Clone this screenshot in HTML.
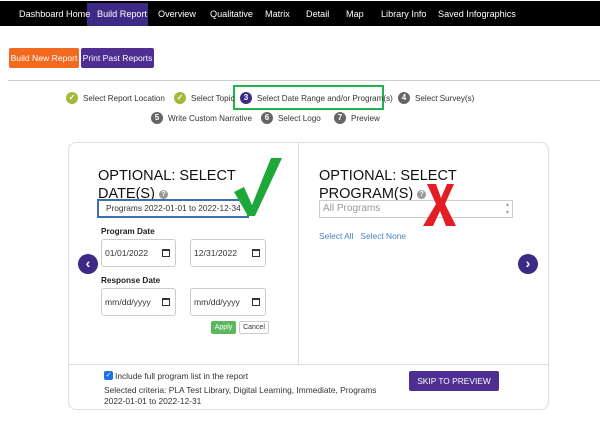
<!DOCTYPE html>
<html><head><meta charset="utf-8"><style>
*{box-sizing:border-box;margin:0;padding:0}
body{width:600px;height:439px;background:#fff;font-family:"Liberation Sans",Arial,sans-serif;position:relative;overflow:hidden;color:#222}
.a{position:absolute;white-space:nowrap}
.nav{left:0;top:1px;width:600px;height:25px;background:#000;color:#fff;font-size:9.1px}
.nav span{position:absolute;top:8px}
.btn{font-size:8.6px;color:#fff;border-radius:2px;text-align:center;line-height:20px;height:20px;top:48px}
.step{font-size:8.1px;color:#333}
.ic{display:inline-block;width:12px;height:12px;border-radius:50%;vertical-align:middle;margin-right:5px;color:#fff;font-size:8px;font-weight:bold;text-align:center;line-height:12px;position:relative;top:-1px}
.g{background:#a4b93a}.d{background:#666}.p{background:#3d2a86}
.title{font-size:14.5px;line-height:18px;color:#111}
.q{display:inline-block;width:9px;height:9px;border-radius:50%;background:#999;color:#fff;font-size:7px;line-height:9px;text-align:center;vertical-align:middle;font-weight:bold}
.inp{border:1px solid #ccc;border-radius:3px;font-size:8.6px;color:#333;padding-left:3px;line-height:26px}
.cal{position:absolute;right:5px;top:9px;width:8px;height:8px;border:1px solid #333;border-top-width:2px}
.lab{font-size:8.2px;font-weight:bold}
.circ{width:20px;height:20px;border-radius:50%;background:#3d2a86;color:#fff;font-weight:bold;font-size:14px;text-align:center;line-height:19px}
</style></head><body>
<div class="a nav">
<div class="a" style="left:87px;top:2px;width:61px;height:23px;background:#3d2a86"></div>
<span style="left:19px">Dashboard Home</span>
<span style="left:97px">Build Report</span>
<span style="left:158px">Overview</span>
<span style="left:210px">Qualitative</span>
<span style="left:265px">Matrix</span>
<span style="left:306px">Detail</span>
<span style="left:346px">Map</span>
<span style="left:381px">Library Info</span>
<span style="left:438px">Saved Infographics</span>
</div>
<div class="a btn" style="left:9px;width:70px;background:#f26a1f">Build New Report</div>
<div class="a btn" style="left:81px;width:73px;background:#4e2e91">Print Past Reports</div>
<div class="a" style="left:8px;top:80px;width:592px;height:1px;background:#ccc"></div>
<div class="a" style="left:233px;top:85px;width:151px;height:25px;border:2px solid #22b14c"></div>
<div class="a step" style="left:66px;top:93px"><span class="ic g">✓</span>Select Report Location</div>
<div class="a step" style="left:174px;top:93px"><span class="ic g">✓</span>Select Topic</div>
<div class="a step" style="left:240px;top:93px"><span class="ic p">3</span>Select Date Range and/or Program(s)</div>
<div class="a step" style="left:398px;top:93px"><span class="ic d">4</span>Select Survey(s)</div>
<div class="a step" style="left:151px;top:113px"><span class="ic d">5</span>Write Custom Narrative</div>
<div class="a step" style="left:261px;top:113px"><span class="ic d">6</span>Select Logo</div>
<div class="a step" style="left:334px;top:113px"><span class="ic d">7</span>Preview</div>

<div class="a" style="left:68px;top:142px;width:481px;height:268px;border:1px solid #ddd;border-radius:8px"></div>
<div class="a" style="left:298px;top:142px;width:1px;height:222px;background:#ddd"></div>
<div class="a" style="left:68px;top:364px;width:481px;height:1px;background:#ddd"></div>

<div class="a title" style="left:98px;top:167px">OPTIONAL: SELECT<br>DATE(S) <span class="q">?</span></div>
<div class="a" style="left:97px;top:199px;width:152px;height:19px;border:2px solid #3f6fb0;font-size:8.3px;line-height:15px;padding-left:7px;color:#333;overflow:hidden">Programs 2022-01-01 to 2022-12-34</div>
<div class="a lab" style="left:101px;top:227px">Program Date</div>
<div class="a inp" style="left:101px;top:239px;width:75px;height:28px">01/01/2022<i class="cal"></i></div>
<div class="a inp" style="left:190px;top:239px;width:76px;height:28px">12/31/2022<i class="cal"></i></div>
<div class="a lab" style="left:101px;top:276px">Response Date</div>
<div class="a inp" style="left:101px;top:288px;width:75px;height:28px">mm/dd/yyyy<i class="cal"></i></div>
<div class="a inp" style="left:190px;top:288px;width:76px;height:28px">mm/dd/yyyy<i class="cal"></i></div>
<div class="a" style="left:211px;top:321px;width:25px;height:13px;background:#5cb85c;color:#fff;font-size:7px;text-align:center;line-height:13px;border-radius:2px">Apply</div>
<div class="a" style="left:239px;top:321px;width:30px;height:13px;border:1px solid #ccc;font-size:7px;text-align:center;line-height:11px;border-radius:2px;color:#333">Cancel</div>
<div class="a circ" style="left:78px;top:254px">‹</div>
<div class="a circ" style="left:518px;top:254px">›</div>

<div class="a title" style="left:319px;top:167px">OPTIONAL: SELECT<br>PROGRAM(S) <span class="q">?</span></div>
<div class="a" style="left:319px;top:200px;width:194px;height:18px;border:1px solid #ccc;font-size:10px;color:#999;line-height:16px;padding-left:3px">All Programs<span style="position:absolute;right:3px;top:0;font-size:6px;line-height:8px;color:#999">▴<br>▾</span></div>
<div class="a" style="left:319px;top:231px;font-size:8.4px;color:#4a7fc1">Select All&nbsp;&nbsp;&nbsp;Select None</div>

<svg class="a" style="left:0;top:0" width="600" height="439">
<path d="M234 192 L244 187 L252 205 L271 158 L282 158 L255 216 L248 216 Z" fill="#1fa83a"/>
<path d="M427 184 L436 184 L441 198 L447 184 L454 184 L445 204 L456 226 L446 226 L440 211 L433 226 L423 226 L436 204 Z" fill="#e41c24"/>
</svg>

<div class="a" style="left:104px;top:371px;width:9px;height:9px;background:#1a73e8;border-radius:2px;color:#fff;font-size:7px;line-height:9px;text-align:center">✓</div>
<div class="a" style="left:115px;top:371px;font-size:8.4px;color:#333">Include full program list in the report</div>
<div class="a" style="left:104px;top:385px;font-size:8.4px;color:#333;line-height:11px">Selected criteria: PLA Test Library, Digital Learning, Immediate, Programs<br>2022-01-01 to 2022-12-31</div>
<div class="a" style="left:409px;top:371px;width:90px;height:20px;background:#4e2e91;color:#fff;font-size:8.4px;text-align:center;line-height:20px;border-radius:2px">SKIP TO PREVIEW</div>
</body></html>
